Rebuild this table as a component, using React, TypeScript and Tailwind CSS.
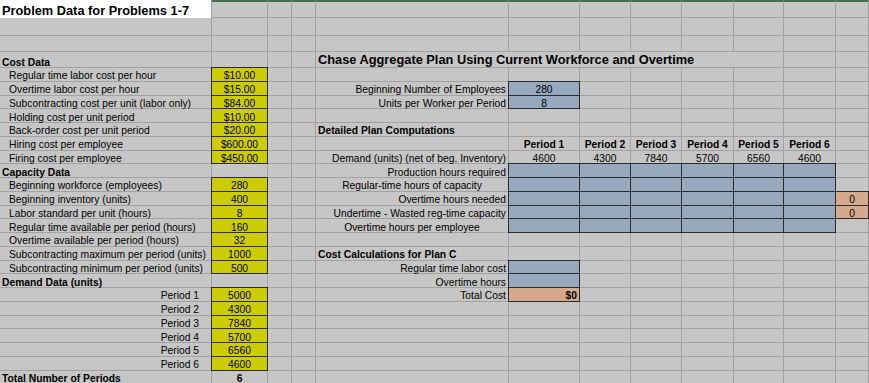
type Kind = 'y' | 'b' | 'o' | 'w';
type Align = 'l' | 'c' | 'r' | 'ind' | 'rp';
type Cell = { t?: string; k?: Kind; a?: Align; bold?: boolean; big?: boolean; span?: number };

const SPAN: Record<number, string> = { 1: '', 2: 'col-span-2', 3: 'col-span-3', 4: 'col-span-4', 5: 'col-span-5', 6: 'col-span-6' };

const ALIGN: Record<Align, string> = {
  l: 'justify-start pl-[2px]',
  c: 'justify-center',
  r: 'justify-end pr-[2px]',
  ind: 'justify-start pl-[9px]',
  rp: 'justify-end pr-[12px]',
};

const FILL: Record<Kind, string> = {
  y: 'relative -ml-px -mt-px bg-[#cccc00] border border-[#2b2b2b]',
  b: 'relative -ml-px -mt-px bg-[#97a9bc] border border-[#2b2b2b]',
  o: 'relative -ml-px -mt-px bg-[#d5a98c] border border-[#2b2b2b]',
  w: 'bg-white border-r border-[#a2a2a2]',
};

const e = (n: number): Cell[] => Array.from({ length: n }, () => ({}));
const blues = (): Cell[] => Array.from({ length: 6 }, () => ({ k: 'b' as Kind }));

const ROWS: Cell[][] = [
  [{ t: 'Problem Data for Problems 1-7', k: 'w', bold: true, big: true, a: 'l' }, ...e(11)],
  e(12),
  e(12),
  [{ t: 'Cost Data', bold: true, a: 'l' }, ...e(3), { t: 'Chase Aggregate Plan Using Current Workforce and Overtime', bold: true, big: true, a: 'l', span: 6 }, ...e(2)],
  [{ t: 'Regular time labor cost per hour', a: 'ind' }, { t: '$10.00', k: 'y', a: 'c' }, ...e(10)],
  [{ t: 'Overtime labor cost per hour', a: 'ind' }, { t: '$15.00', k: 'y', a: 'c' }, ...e(2), { t: 'Beginning Number of Employees', a: 'r' }, { t: '280', k: 'b', a: 'c' }, ...e(6)],
  [{ t: 'Subcontracting cost per unit (labor only)', a: 'ind' }, { t: '$84.00', k: 'y', a: 'c' }, ...e(2), { t: 'Units per Worker per Period', a: 'r' }, { t: '8', k: 'b', a: 'c' }, ...e(6)],
  [{ t: 'Holding cost per unit period', a: 'ind' }, { t: '$10.00', k: 'y', a: 'c' }, ...e(10)],
  [{ t: 'Back-order cost per unit period', a: 'ind' }, { t: '$20.00', k: 'y', a: 'c' }, ...e(2), { t: 'Detailed Plan Computations', bold: true, a: 'l' }, ...e(7)],
  [{ t: 'Hiring cost per employee', a: 'ind' }, { t: '$600.00', k: 'y', a: 'c' }, ...e(3),
    ...['Period 1', 'Period 2', 'Period 3', 'Period 4', 'Period 5', 'Period 6'].map((t) => ({ t, bold: true, a: 'c' as Align })), ...e(1)],
  [{ t: 'Firing cost per employee', a: 'ind' }, { t: '$450.00', k: 'y', a: 'c' }, ...e(2), { t: 'Demand (units) (net of beg. Inventory)', a: 'r' },
    ...['4600', '4300', '7840', '5700', '6560', '4600'].map((t) => ({ t, a: 'c' as Align })), ...e(1)],
  [{ t: 'Capacity Data', bold: true, a: 'l' }, ...e(3), { t: 'Production hours required', a: 'r' }, ...blues(), ...e(1)],
  [{ t: 'Beginning workforce (employees)', a: 'ind' }, { t: '280', k: 'y', a: 'c' }, ...e(2), { t: 'Regular-time hours of capacity', a: 'c' }, ...blues(), ...e(1)],
  [{ t: 'Beginning inventory (units)', a: 'ind' }, { t: '400', k: 'y', a: 'c' }, ...e(2), { t: 'Overtime hours needed', a: 'r' }, ...blues(), { t: '0', k: 'o', a: 'c' }],
  [{ t: 'Labor standard per unit (hours)', a: 'ind' }, { t: '8', k: 'y', a: 'c' }, ...e(2), { t: 'Undertime - Wasted reg-time capacity', a: 'r' }, ...blues(), { t: '0', k: 'o', a: 'c' }],
  [{ t: 'Regular time available per period (hours)', a: 'ind' }, { t: '160', k: 'y', a: 'c' }, ...e(2), { t: 'Overtime hours per employee', a: 'c' }, ...blues(), ...e(1)],
  [{ t: 'Overtime available per period (hours)', a: 'ind' }, { t: '32', k: 'y', a: 'c' }, ...e(10)],
  [{ t: 'Subcontracting maximum per period (units)', a: 'ind' }, { t: '1000', k: 'y', a: 'c' }, ...e(2), { t: 'Cost Calculations for Plan C', bold: true, a: 'l' }, ...e(7)],
  [{ t: 'Subcontracting minimum per period (units)', a: 'ind' }, { t: '500', k: 'y', a: 'c' }, ...e(2), { t: 'Regular time labor cost', a: 'r' }, { k: 'b' }, ...e(6)],
  [{ t: 'Demand Data (units)', bold: true, a: 'l' }, ...e(3), { t: 'Overtime hours', a: 'r' }, { k: 'b' }, ...e(6)],
  [{ t: 'Period 1', a: 'rp' }, { t: '5000', k: 'y', a: 'c' }, ...e(2), { t: 'Total Cost', a: 'r' }, { t: '$0', k: 'o', a: 'r', bold: true }, ...e(6)],
  [{ t: 'Period 2', a: 'rp' }, { t: '4300', k: 'y', a: 'c' }, ...e(10)],
  [{ t: 'Period 3', a: 'rp' }, { t: '7840', k: 'y', a: 'c' }, ...e(10)],
  [{ t: 'Period 4', a: 'rp' }, { t: '5700', k: 'y', a: 'c' }, ...e(10)],
  [{ t: 'Period 5', a: 'rp' }, { t: '6560', k: 'y', a: 'c' }, ...e(10)],
  [{ t: 'Period 6', a: 'rp' }, { t: '4600', k: 'y', a: 'c' }, ...e(10)],
  [{ t: 'Total Number of Periods', bold: true, a: 'l' }, { t: '6', bold: true, a: 'c' }, ...e(10)],
];

function SheetCell({ c, top }: { c: Cell; top: boolean }) {
  const fill = c.k ? FILL[c.k] : 'border-r border-b border-[#a2a2a2]';
  const green = top && c.k !== 'w' ? 'border-t-2 border-t-[#3a7452]' : '';
  return (
    <div
      className={`flex items-end whitespace-nowrap leading-none min-w-0 pb-[1px] ${SPAN[c.span ?? 1]} ${fill} ${green} ${ALIGN[c.a ?? 'l']} ${
        c.big ? 'text-[12.8px]' : 'text-[10.3px]'
      } ${c.bold ? 'font-bold' : ''}`}
    >
      {c.t && <span className={c.big ? 'relative top-[1px]' : 'relative top-[2px]'}>{c.t}</span>}
    </div>
  );
}

export default function App() {
  return (
    <div className="w-[869px] h-[383px] overflow-hidden bg-[#c6c6c6] text-black font-['Liberation_Sans',Arial,sans-serif]">
      <div className="grid grid-cols-[212px_56px_24px_24px_193px_71px_51px_51px_52px_50px_52px_33px] grid-rows-[18px_18px_16px_16px_repeat(23,13.75px)]">
        {ROWS.map((row, ri) =>
          row.map((c, ci) => <SheetCell key={`${ri}-${ci}`} c={c} top={ri === 0} />)
        )}
      </div>
    </div>
  );
}
